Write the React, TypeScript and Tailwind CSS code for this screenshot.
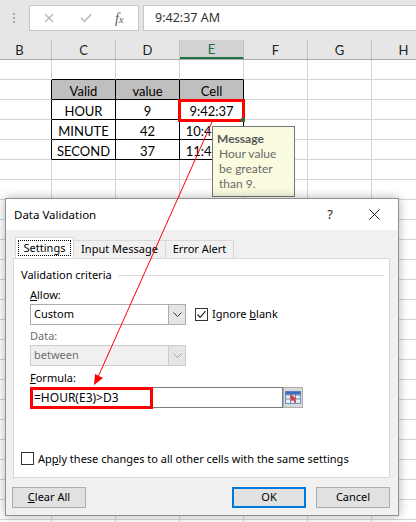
import React from "react";

const cols = ["B", "C", "D", "E", "F", "G", "H"];

// table content by [row][col]
const table: Record<number, Record<number, string>> = {
  1: { 1: "Valid", 2: "value", 3: "Cell" },
  2: { 1: "HOUR", 2: "9", 3: "9:42:37" },
  3: { 1: "MINUTE", 2: "42", 3: "10:42:37" },
  4: { 1: "SECOND", 2: "37", 3: "11:42:37" },
};

const inTable = (r: number, c: number) => r >= 1 && r <= 4 && c >= 1 && c <= 3;

function Chevron({ color = "#333" }: { color?: string }) {
  return (
    <svg width="9" height="5" viewBox="0 0 9 5">
      <polyline points="0.5,0.5 4.5,4.5 8.5,0.5" fill="none" stroke={color} strokeWidth="1" />
    </svg>
  );
}

function CheckBox({ checked }: { checked?: boolean }) {
  return (
    <div className="flex h-[13px] w-[13px] items-center justify-center border border-[#333] bg-white">
      {checked && (
        <svg width="11" height="11" viewBox="0 0 11 11">
          <polyline points="1.5,5.5 4.2,8.3 9.5,2.2" fill="none" stroke="#222" strokeWidth="1.2" />
        </svg>
      )}
    </div>
  );
}

function Sheet() {
  return (
    <div className="flex flex-col">
      {/* formula bar */}
      <div className="flex h-[40px] items-start bg-[#e6e6e6] pt-[5px]">
        <div className="ml-[13px] mt-[8px] flex w-[3px] flex-col gap-[2px]">
          <div className="h-[2px] w-[2px] bg-[#a8a8a8]" />
          <div className="h-[2px] w-[2px] bg-[#a8a8a8]" />
          <div className="h-[2px] w-[2px] bg-[#a8a8a8]" />
        </div>
        <div className="ml-[13px] flex h-[26px] w-[110px] items-center border border-[#c6c6c6] bg-white">
          <svg className="ml-[14px]" width="10" height="10" viewBox="0 0 10 10">
            <path d="M1 1 L9 9 M9 1 L1 9" stroke="#b4b4b4" strokeWidth="1.2" />
          </svg>
          <svg className="ml-[26px]" width="12" height="10" viewBox="0 0 12 10">
            <polyline points="1,5 4.5,8.5 11,1.5" fill="none" stroke="#b4b4b4" strokeWidth="1.4" />
          </svg>
          <span className="ml-[23px] font-['Liberation_Serif',serif] text-[14px] italic text-[#555]">
            f<span className="text-[10px]">x</span>
          </span>
        </div>
        <div className="ml-[4px] flex h-[26px] flex-1 items-center border border-r-0 border-[#c6c6c6] bg-white pl-[11px] font-['Noto_Sans',sans-serif] text-[12.5px] text-[#333]">
          9:42:37 AM
        </div>
      </div>

      {/* column headers */}
      <div className="-ml-[12px] flex h-[20px] border-b border-[#ababab] bg-[#e6e6e6]">
        {cols.map((c) => (
          <div
            key={c}
            className={`flex w-[64px] shrink-0 items-center justify-center border-r border-[#c4c4c4] pt-[3px] font-[Lato,sans-serif] text-[13px] ${
              c === "E"
                ? "border-b-2 border-b-[#217346] bg-[#d2d2d2] text-[#1e6b40]"
                : "text-[#222]"
            }`}
          >
            {c}
          </div>
        ))}
      </div>

      {/* grid */}
      <div className="-ml-[12px] flex flex-col">
        {Array.from({ length: 24 }).map((_, r) => (
          <div key={r} className="flex h-[20px]">
            {cols.map((_, c) => {
              const t = inTable(r, c);
              const rightBlack = t || (c === 0 && r >= 1 && r <= 4);
              const bottomBlack = t || (r === 0 && c >= 1 && c <= 3);
              return (
                <div
                  key={c}
                  className={`flex w-[64px] shrink-0 items-center justify-center border-r border-b pt-[4px] font-[Lato,sans-serif] text-[13px] text-black ${
                    rightBlack ? "border-r-black" : "border-r-[#d4d4d4]"
                  } ${bottomBlack ? "border-b-black" : "border-b-[#d4d4d4]"} ${
                    r === 1 && t ? "bg-[#bfbfbf]" : ""
                  }`}
                >
                  {table[r]?.[c] ?? ""}
                </div>
              );
            })}
          </div>
        ))}
      </div>
    </div>
  );
}

function Dialog() {
  return (
    <div className="absolute left-[5px] top-[198px] z-20 flex h-[318px] w-[394px] flex-col border border-[#8f8f8f] bg-[#f0f0f0] font-['Noto_Sans',sans-serif] text-[11px] text-black shadow-[0_0_10px_rgba(0,0,0,0.3)]">
      {/* title */}
      <div className="flex h-[31px] items-center bg-white">
        <span className="ml-[8px] text-[11.5px]">Data Validation</span>
        <span className="ml-auto text-[13px] text-[#222]">?</span>
        <svg className="ml-[36px] mr-[18px]" width="11" height="11" viewBox="0 0 11 11">
          <path d="M0.5 0.5 L10.5 10.5 M10.5 0.5 L0.5 10.5" stroke="#222" strokeWidth="1" />
        </svg>
      </div>

      {/* tabs */}
      <div className="ml-[9px] mt-[7px] flex items-end">
        <div className="flex h-[21px] w-[59px] items-center justify-center border border-b-0 border-[#d9d9d9] bg-white">
          <div className="flex h-[16px] w-[53px] items-center justify-center border border-dotted border-black">
            Settings
          </div>
        </div>
        <div className="flex h-[18px] w-[92px] items-center justify-center border border-l-0 border-b-0 border-[#d9d9d9]">
          Input Message
        </div>
        <div className="flex h-[18px] w-[68px] items-center justify-center border border-l-0 border-b-0 border-[#d9d9d9]">
          Error Alert
        </div>
      </div>

      {/* panel */}
      <div className="ml-[7px] flex h-[220px] w-[377px] flex-col border border-[#d9d9d9] bg-white">
        <div className="mt-[9px] flex h-[14px] items-center pl-[7px]">
          <span>Validation criteria</span>
          <div className="ml-[6px] mr-[5px] h-px flex-1 bg-[#dcdcdc]" />
        </div>

        <div className="ml-[16px] flex flex-col">
          <span className="mt-[6px] h-[14px] leading-[14px]">
            <u>A</u>llow:
          </span>
          <div className="mt-[2px] flex items-center">
            <div className="flex h-[21px] w-[156px] items-center border border-[#adadad] bg-white">
              <span className="ml-[3px] flex-1">Custom</span>
              <div className="flex h-full w-[17px] items-center justify-center border-l border-[#adadad] bg-[#e5e5e5]">
                <Chevron />
              </div>
            </div>
            <div className="ml-[9px]">
              <CheckBox checked />
            </div>
            <span className="ml-[4px]">
              Ignore <u>b</u>lank
            </span>
          </div>

          <span className="mt-[4px] h-[14px] leading-[14px] text-[#6d6d6d]">Data:</span>
          <div className="mt-[2px] flex h-[21px] w-[156px] items-center border border-[#cccccc] bg-[#f0f0f0] text-[#6d6d6d]">
            <span className="ml-[3px] flex-1">between</span>
            <div className="flex h-full w-[17px] items-center justify-center border-l border-[#cccccc] bg-[#e5e5e5]">
              <Chevron color="#a0a0a0" />
            </div>
          </div>

          <span className="mt-[5px] h-[14px] leading-[14px]">
            <u>F</u>ormula:
          </span>
          <div className="mt-[2px] flex items-center">
            <div className="relative flex h-[21px] w-[253px] items-center border border-[#7a7a7a] bg-white">
              <span className="ml-[3px] text-[12px]">=HOUR(E3)&gt;D3</span>
              <div className="absolute -left-[1px] -top-[1px] h-[22px] w-[123px] border-[3px] border-[#ff0000]" />
            </div>
            <div className="flex h-[21px] w-[20px] items-center justify-center border border-[#adadad] bg-[#dadada]">
              <svg width="16" height="13" viewBox="0 0 16 13">
                <rect x="0.5" y="0.5" width="15" height="12" fill="#e8eef8" stroke="#6f8fc0" />
                <line x1="0.5" y1="4" x2="15.5" y2="4" stroke="#6f8fc0" />
                <line x1="0.5" y1="8" x2="15.5" y2="8" stroke="#6f8fc0" />
                <line x1="5.5" y1="0.5" x2="5.5" y2="12.5" stroke="#6f8fc0" />
                <line x1="10.5" y1="0.5" x2="10.5" y2="12.5" stroke="#6f8fc0" />
                <rect x="0.5" y="0.5" width="15" height="3" fill="#3d6fb8" />
                <path d="M5 3 L12 8 L9.5 8.5 L11.5 11.5 L10 12 L8 9 L6.5 10.5 Z" fill="#e23a2a" />
              </svg>
            </div>
          </div>
        </div>

        <div className="mb-[10px] mt-auto flex items-center pl-[7px]">
          <CheckBox />
          <span className="ml-[4px]">
            Ap<u>p</u>ly these changes to all other cells with the same settings
          </span>
        </div>
      </div>

      {/* buttons */}
      <div className="mt-[9px] flex items-center px-[6px]">
        <button className="flex h-[21px] w-[74px] items-center justify-center border border-[#adadad] bg-[#e1e1e1]">
          <span>
            <u>C</u>lear All
          </span>
        </button>
        <button className="ml-auto flex h-[21px] w-[74px] items-center justify-center border-2 border-[#0078d7] bg-[#e1e1e1]">
          OK
        </button>
        <button className="ml-[10px] mr-[2px] flex h-[21px] w-[74px] items-center justify-center border border-[#adadad] bg-[#e1e1e1]">
          Cancel
        </button>
      </div>
    </div>
  );
}

export default function App() {
  return (
    <div className="relative h-[522px] w-[416px] overflow-hidden bg-white">
      <Sheet />

      {/* selected cell highlight */}
      <div className="absolute left-[178px] top-[99px] h-[23px] w-[67px] border-[3px] border-[#ff0000]" />
      <div className="absolute left-[241px] top-[118px] h-[4px] w-[4px] bg-[#217346]" />

      {/* input message tooltip */}
      <div className="absolute left-[212px] top-[126px] z-10 flex h-[71px] w-[83px] flex-col border border-[#767676] bg-[#fbfbe0] pl-[4px] pt-[4px] font-[Lato,sans-serif] text-[12px] leading-[15px]">
        <span className="font-bold text-[#575757]">Message</span>
        <span className="pl-[2px] text-[#6a6a6a]">Hour value</span>
        <span className="pl-[2px] text-[#6a6a6a]">be greater</span>
        <span className="pl-[2px] text-[#6a6a6a]">than 9.</span>
      </div>

      <Dialog />

      {/* arrow */}
      <svg className="pointer-events-none absolute left-0 top-0 z-30" width="416" height="522">
        <line x1="212" y1="122" x2="98" y2="377" stroke="#ff0000" strokeWidth="1" />
        <polygon points="94,385 95,374 103,378" fill="#ff0000" />
      </svg>
    </div>
  );
}
